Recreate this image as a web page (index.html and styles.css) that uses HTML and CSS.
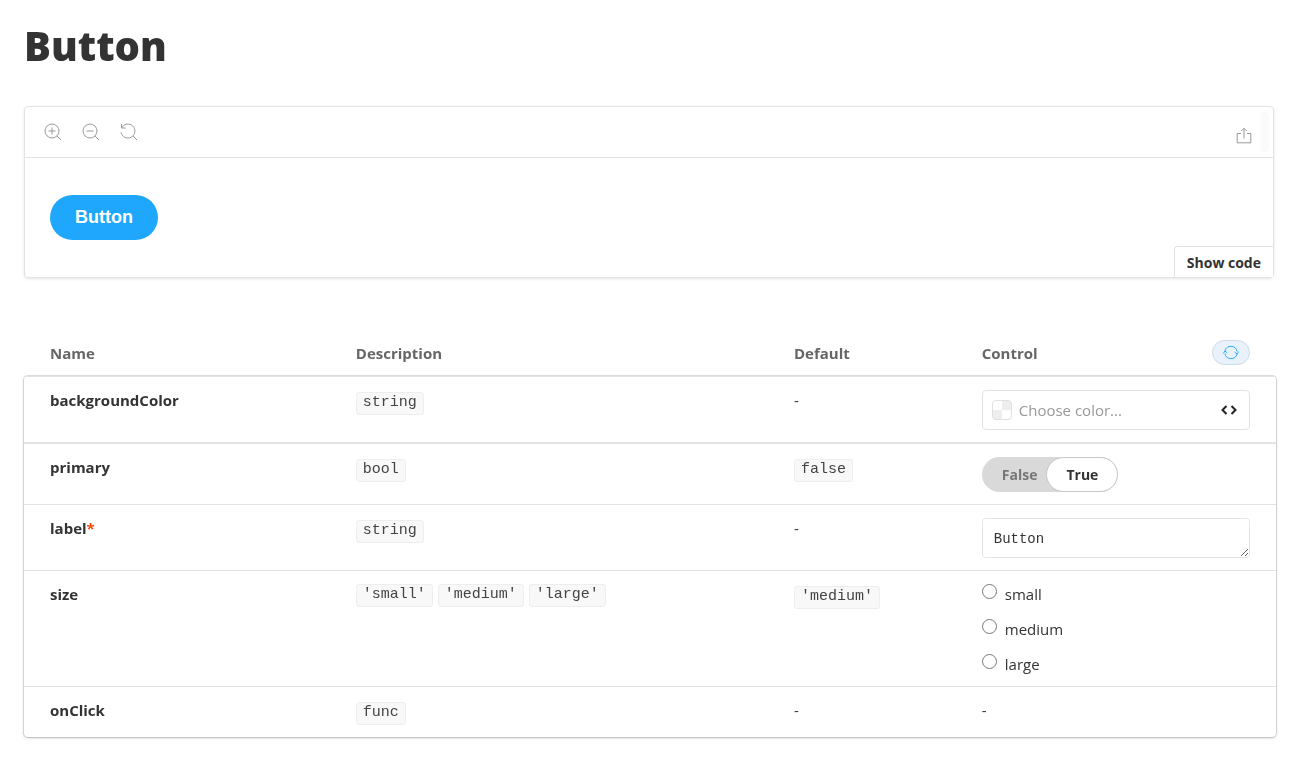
FILE: index.html
```html
<!DOCTYPE html>
<html lang="en">
    <head>
        <meta charset="utf-8">
        <title>Button</title>
        <link rel="stylesheet" href="styles.css">
    </head>
    <body>
        <h1>Button</h1>

        <div class="preview">
            <div class="toolbar">
                <button class="tool" aria-label="Zoom in">
                    <svg viewBox="0 0 18 18"><circle cx="8" cy="8" r="7"/><path d="M13 13l4 4M8 4.5v7M4.5 8h7"/></svg>
                </button>
                <button class="tool" aria-label="Zoom out">
                    <svg viewBox="0 0 18 18"><circle cx="8" cy="8" r="7"/><path d="M13 13l4 4M4.5 8h7"/></svg>
                </button>
                <button class="tool" aria-label="Reset zoom">
                    <svg viewBox="0 0 18 18"><path d="M1.6 1v4h4M1.6 5A7 7 0 1 1 1 9.2M13 13l4 4"/></svg>
                </button>
                <a class="tool share" href="#" aria-label="Open canvas in new tab">
                    <svg viewBox="0 0 18 18"><path d="M6 6.5H2.2v9.3h13.6V6.5H12M9 11.5V1.5M6.2 4L9 1.2 11.8 4"/></svg>
                </a>
                <span class="scroll"></span>
            </div>
            <div class="canvas">
                <button class="primary">Button</button>
            </div>
            <button class="show_code">Show code</button>
        </div>

        <table class="args">
            <thead>
                <tr>
                    <th>Name</th>
                    <th class="description">Description</th>
                    <th class="default">Default</th>
                    <th class="control">
                        <div class="control_head">
                            Control
                            <button class="reset" aria-label="Reset controls">
                                <svg viewBox="0 0 18 16"><path d="M2.6 6.4A6.6 6.6 0 0 1 15.5 7M15.4 9.6A6.6 6.6 0 0 1 2.5 9M.8 9l1.7-2.6L5 8.4M17.2 7l-1.7 2.6L13 7.6"/></svg>
                            </button>
                        </div>
                    </th>
                </tr>
            </thead>
            <tbody>
                <tr>
                    <td class="name">backgroundColor</td>
                    <td><code>string</code></td>
                    <td>-</td>
                    <td>
                        <div class="color">
                            <span class="swatch"></span>
                            <input type="text" placeholder="Choose color..." aria-label="backgroundColor">
                            <button class="cycle" aria-label="Change color format">
                                <svg viewBox="0 0 16 10"><path d="M5.5 1L1.5 5l4 4M10.5 1l4 4-4 4"/></svg>
                            </button>
                        </div>
                    </td>
                </tr>
                <tr class="thick">
                    <td class="name">primary</td>
                    <td><code>bool</code></td>
                    <td><code>false</code></td>
                    <td>
                        <label class="toggle">
                            <input type="checkbox" aria-label="primary" checked>
                            <span>False</span>
                            <span>True</span>
                        </label>
                    </td>
                </tr>
                <tr>
                    <td class="name">label<span class="required">*</span></td>
                    <td><code>string</code></td>
                    <td>-</td>
                    <td><textarea rows="1" aria-label="label">Button</textarea></td>
                </tr>
                <tr>
                    <td class="name">size</td>
                    <td><div class="values"><code>'small'</code><code>'medium'</code><code>'large'</code></div></td>
                    <td><code>'medium'</code></td>
                    <td>
                        <div class="options">
                            <label><input type="radio" name="size">small</label>
                            <label><input type="radio" name="size">medium</label>
                            <label><input type="radio" name="size">large</label>
                        </div>
                    </td>
                </tr>
                <tr>
                    <td class="name">onClick</td>
                    <td><code>func</code></td>
                    <td>-</td>
                    <td>-</td>
                </tr>
            </tbody>
        </table>
    </body>
</html>
```
FILE: styles.css
```css
* {
    box-sizing: border-box;
}
body {
    margin: 0;
    padding: 20px 26px 24px 24px;
    background: #fff;
    color: #333;
    font-family: "Open Sans", "Noto Sans", sans-serif;
    font-size: 15px;
    line-height: 20px;
}
button, input {
    font-family: inherit;
}
button {
    padding: 0;
    border: 0;
    background: none;
    cursor: pointer;
}
svg {
    display: block;
    fill: none;
    stroke: currentColor;
}
h1 {
    margin: 0 0 34px;
    font-size: 40px;
    font-weight: 900;
    line-height: 52px;
}
.preview {
    position: relative;
    margin-right: 2px;
    border: 1px solid #e3e3e3;
    border-radius: 4px;
    box-shadow: 0 1px 3px rgba(0, 0, 0, 0.1);
}
.toolbar {
    display: flex;
    align-items: center;
    gap: 20px;
    height: 51px;
    padding: 0 4px 0 19px;
    border-bottom: 1px solid #e3e3e3;
}
.tool {
    color: #999;
}
.tool svg {
    width: 18px;
    height: 18px;
}
.share {
    margin-left: auto;
    padding-top: 8px;
}
.scroll {
    width: 8px;
    height: 40px;
    margin-left: -12px;
    border-radius: 4px;
    background: #fafafa;
}
.canvas {
    height: 119px;
    padding: 37px 25px;
}
.primary {
    height: 45px;
    padding: 0 25px;
    border-radius: 48px;
    background: #1ea7fd;
    color: #fff;
    font-family: "Liberation Sans", Arial, sans-serif;
    font-size: 18px;
    font-weight: 700;
}
.show_code {
    position: absolute;
    right: 0;
    bottom: 0;
    height: 31px;
    padding: 0 12px;
    border: 1px solid #e3e3e3;
    border-width: 1px 0 0 1px;
    border-radius: 4px 0 0 0;
    background: #fff;
    color: #333;
    font-size: 14px;
    font-weight: 700;
}
.args {
    width: 100%;
    margin-top: 54px;
    border-collapse: separate;
    border-spacing: 0;
    table-layout: fixed;
}
.description {
    width: 35%;
}
.default {
    width: 15%;
}
.control {
    width: 24.7%;
}
th {
    padding: 8px 15px 11px;
    color: #666;
    text-align: left;
    vertical-align: middle;
}
td {
    padding: 13px 15px 12px;
    border-top: 1px solid #e3e3e3;
    vertical-align: top;
}
th:first-child, td:first-child {
    padding-left: 26px;
}
th:last-child, td:last-child {
    padding-right: 26px;
}
tbody {
    border-radius: 4px;
    box-shadow: 0 1px 3px rgba(0, 0, 0, 0.2), 0 0 0 1px #e3e3e3;
}
.thick td {
    border-top-width: 2px;
}
.control_head {
    display: flex;
    align-items: center;
    justify-content: space-between;
}
.reset {
    padding: 4px 9px;
    border: 1px solid #ccdbe8;
    border-radius: 13px;
    background: #e9f2fb;
    color: #1ea7fd;
}
.reset svg {
    width: 18px;
    height: 15px;
}
.name {
    font-weight: 700;
}
.required {
    color: #ff4400;
}
code {
    display: inline-block;
    height: 23px;
    padding: 0 6px;
    border: 1px solid #eee;
    border-radius: 3px;
    background: #f8f8f8;
    color: #444;
    font-family: "Liberation Mono", monospace;
    font-size: 15px;
    line-height: 20px;
}
.values {
    display: flex;
    gap: 5px;
}
.color {
    display: flex;
    align-items: center;
    gap: 7px;
    height: 40px;
    padding: 0 12px 0 9px;
    border: 1px solid #e3e3e3;
    border-radius: 4px;
}
.color input {
    flex: 1;
    min-width: 0;
    padding: 0;
    border: 0;
    outline: 0;
    font-size: 15px;
}
.color input::placeholder {
    color: #999;
}
.swatch {
    width: 20px;
    height: 20px;
    border: 1px solid #e0e0e0;
    border-radius: 4px;
    background: conic-gradient(#eee 25%, #fff 0 50%, #eee 0 75%, #fff 0);
}
.cycle {
    color: #222;
}
.cycle svg {
    width: 16px;
    height: 10px;
    stroke-width: 2;
}
.toggle {
    display: inline-flex;
    height: 35px;
    border-radius: 18px;
    background: #d9d9d9;
    color: #777;
    font-size: 14px;
    font-weight: 700;
    line-height: 35px;
}
.toggle input {
    position: absolute;
    opacity: 0;
}
.toggle span {
    padding: 0 9px 0 20px;
}
.toggle input:checked ~ span:last-child {
    padding: 0 19px;
    border: 1px solid #c8c8c8;
    border-radius: 18px;
    background: #fff;
    color: #333;
    line-height: 33px;
}
textarea {
    display: block;
    width: 100%;
    height: 40px;
    padding: 10px 11px;
    border: 1px solid #e3e3e3;
    border-radius: 4px;
    color: #333;
    font-family: "Liberation Mono", monospace;
    font-size: 14px;
    line-height: 20px;
}
.options {
    display: flex;
    flex-direction: column;
    gap: 15px;
}
.options label {
    display: flex;
    gap: 8px;
}
.options input {
    width: 15px;
    height: 15px;
    margin: 0;
}
```
